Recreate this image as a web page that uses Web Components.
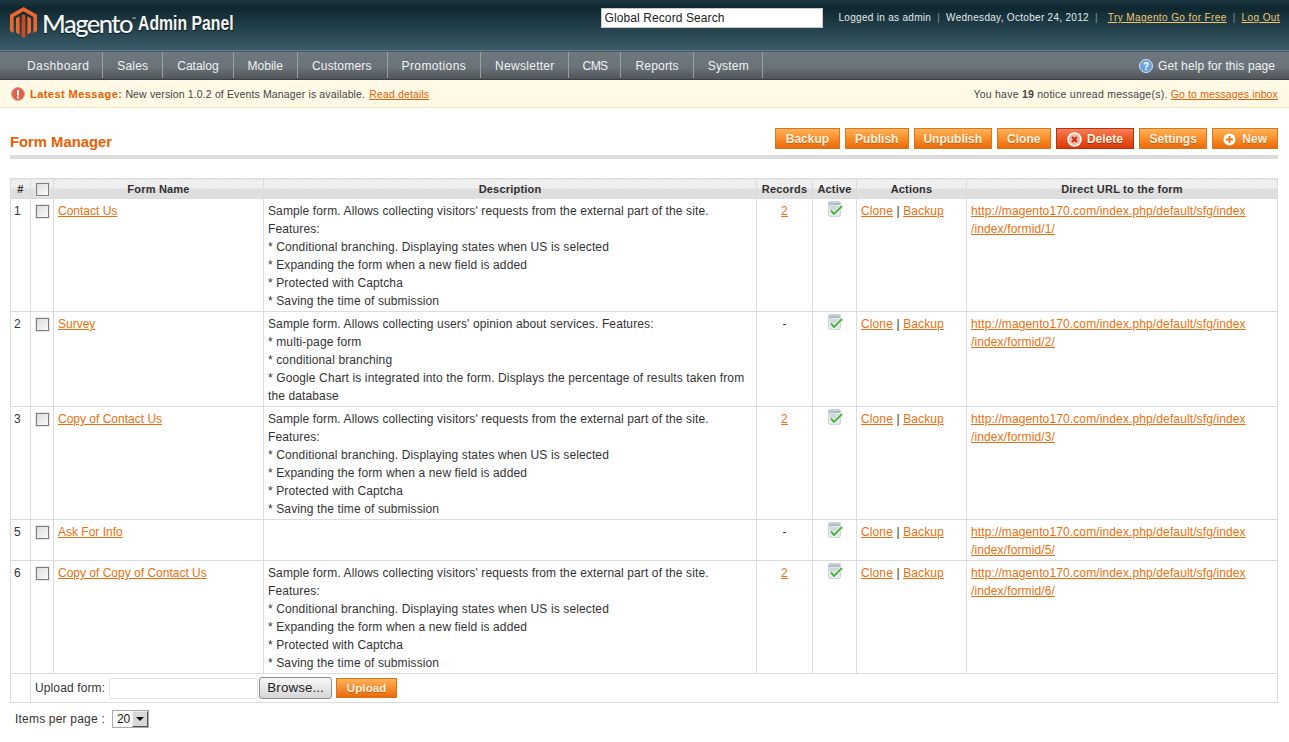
<!DOCTYPE html>
<html><head><meta charset="utf-8"><title>Form Manager</title>
<style>
html,body{margin:0;padding:0;background:#fff;overflow:hidden}
body{font:12px/18px "Liberation Sans",Arial,sans-serif;color:#2f2f2f;width:1289px;height:742px}
mg-header,mg-nav,mg-notice,mg-titlebar,mg-form-table,mg-pager{display:block}
</style></head><body>
<mg-header></mg-header>
<mg-nav></mg-nav>
<mg-notice></mg-notice>
<mg-titlebar title-text="Form Manager">
  <mg-button>Backup</mg-button><mg-button>Publish</mg-button><mg-button compact>Unpublish</mg-button><mg-button>Clone</mg-button><mg-button variant="delete" icon="x">Delete</mg-button><mg-button>Settings</mg-button><mg-button icon="plus">New</mg-button>
</mg-titlebar>
<mg-form-table></mg-form-table>
<mg-pager></mg-pager>
<script>
function shadow(el,html){el.attachShadow({mode:'open'}).innerHTML=html;}
customElements.define('mg-header',class extends HTMLElement{connectedCallback(){shadow(this,`<style>
:host{display:block;height:51px;box-sizing:border-box;border-bottom:1px solid #5f7f8b;background:linear-gradient(#1c3640 0,#0f272f 8px,#3a5c69 100%);color:#e3e9eb;overflow:hidden}
.w{display:flex;justify-content:space-between;align-items:flex-start;height:100%}
.logo{display:flex;align-items:flex-start;padding:7px 0 0 10px}
.logo svg{display:block;flex:none}
.m{font:500 25.5px/30px Lato,"Open Sans",sans-serif;color:#f4f6f6;margin:1px 0 0 5px;letter-spacing:-1.5px;text-shadow:0 1px 1px #0a1a20;white-space:nowrap}
.m sup{font-size:5px;line-height:0;vertical-align:12px;letter-spacing:0}
.a{display:inline-block;font:bold 20px/33px "Liberation Sans",sans-serif;color:#f4f6f6;margin-left:2px;text-shadow:1px 1px 1px #0a1a20;white-space:nowrap;transform:scaleX(.79);transform-origin:0 50%}
.r{display:flex;align-items:center;padding:8px 9px 0 0}
.s{box-sizing:border-box;width:222px;height:20px;background:#fff;border:1px solid #c8c8c8;color:#222;font:12px/18px "Liberation Sans",sans-serif;padding:0 3px;margin-right:16px;letter-spacing:.1px}
.t{font-size:10px;line-height:18px;white-space:nowrap;letter-spacing:.3px}
.t i{font-style:normal;color:#7e959e;margin:0 6px}
.t i.w2{margin-right:10px}
.t a{color:#efc76c;text-decoration:underline;letter-spacing:.4px}
</style><div class="w"><div class="logo">
<svg width="27" height="32" viewBox="0 0 27 32"><path d="M13.500 0 27 7.800V24l-3.600 2.100V9.900L13.500 4.200 3.600 9.900v16.200L0 24V7.800Z" fill="#ee672f"/><path d="M6 11.300 9.600 9.200V27.600l-3.600-2.100Z" fill="#ee672f"/><path d="M17.400 9.200 21 11.300v14.200l-3.600 2.100Z" fill="#ee672f"/><path d="M11.700 8.200 13.500 7.200 15.300 8.200V29.500l-1.800 1.500-1.800-1.500Z" fill="#d4491a"/></svg>
<span class="m">Magento<sup>™</sup></span><span class="a">Admin Panel</span></div>
<div class="r"><div class="s">Global Record Search</div><div class="t">Logged in as admin<i>|</i>Wednesday, October 24, 2012<i class="w2">|</i><a>Try Magento Go for Free</a><i>|</i><a>Log Out</a></div></div></div>`);}});
customElements.define('mg-nav',class extends HTMLElement{connectedCallback(){
const items=['Dashboard','Sales','Catalog','Mobile','Customers','Promotions','Newsletter','CMS','Reports','System'];
shadow(this,`<style>
:host{display:block;height:29px;box-sizing:border-box;background:linear-gradient(#6f787e 0,#6a7379 55%,#50565b 100%);color:#f0f2f3;border-bottom:1px solid #3c4145;border-top:1px solid #54595d}
.w{display:flex;justify-content:space-between;height:100%;padding-left:13px}
ul{display:flex;list-style:none;margin:0;padding:0}
li{padding:0 14px;font-size:12px;line-height:28px;letter-spacing:.18px;border-right:1px solid #9aa1a6;height:26px}
li:nth-child(1){letter-spacing:.4px;padding-right:13px}
li:nth-child(3),li:nth-child(4){letter-spacing:0}
li:nth-child(5){padding-right:15px}
li:nth-child(6){letter-spacing:.38px}
li:nth-child(7){letter-spacing:.28px;padding-right:13px}
li:nth-child(8){letter-spacing:-.6px;padding-right:13px}
li:nth-child(10){padding-right:13px}
.h{display:flex;align-items:center;font-size:12px;letter-spacing:.1px;padding:0 14px 0 0;height:27px;gap:5px}
svg{display:block}
</style><div class="w"><ul>${items.map(i=>`<li>${i}</li>`).join('')}</ul>
<div class="h"><svg width="14" height="14" viewBox="0 0 14 14"><circle cx="7" cy="7" r="6.500" fill="#6fa3d8" stroke="#d6e6f5"/><text x="7" y="10.500" font-size="10" font-weight="bold" text-anchor="middle" fill="#fff" font-family="Liberation Sans">?</text></svg>Get help for this page</div></div>`);}});
customElements.define('mg-notice',class extends HTMLElement{connectedCallback(){shadow(this,`<style>
:host{display:block;height:28px;box-sizing:border-box;background:#fff9e6;border-bottom:1px solid #f2e6bb;font-size:10.500px;letter-spacing:.14px;color:#444}
.w{display:flex;justify-content:space-between;align-items:center;height:27px;padding:0 11px;white-space:nowrap}
.l{display:flex;align-items:center;gap:5px}
.l a{margin-left:1px}
b.o{color:#eb5e00;font-size:11px;letter-spacing:.45px}
a{color:#eb5e00;text-decoration:underline}
.rt{letter-spacing:.24px}
.rt a{letter-spacing:.14px}
svg{display:block}
</style><div class="w"><div class="l"><svg width="14" height="14" viewBox="0 0 14 14"><circle cx="7" cy="7" r="6.500" fill="#e2604c" stroke="#e9a08f"/><rect x="6" y="3" width="2" height="5.500" fill="#fff"/><rect x="6" y="9.500" width="2" height="2" fill="#fff"/></svg><span><b class="o">Latest Message:</b> New version 1.0.2 of Events Manager is available. <a>Read details</a></span></div>
<div class="rt">You have <b>19</b> notice unread message(s). <a>Go to messages inbox</a></div></div>`);}});
customElements.define('mg-button',class extends HTMLElement{connectedCallback(){
const ic=this.getAttribute('icon');
const icon=ic==='x'?`<svg width="15" height="15" viewBox="0 0 15 15"><circle cx="7.500" cy="7.500" r="6.500" fill="#f6b9a8" stroke="#fff" stroke-width="1.500"/><path d="M5 5l5 5M10 5l-5 5" stroke="#d0300f" stroke-width="2.200"/></svg>`:ic==='plus'?`<svg width="13" height="13" viewBox="0 0 13 13"><circle cx="6.500" cy="6.500" r="6" fill="#fff"/><path d="M6.500 3v7M3 6.500h7" stroke="#ee7a14" stroke-width="2"/></svg>`:'';
const pad=this.hasAttribute('compact')?'8.500':ic?'10':'9.500';
shadow(this,`<style>
:host{display:block}
.b{box-sizing:border-box;height:21px;display:flex;align-items:center;justify-content:center;gap:${ic==='plus'?'6':'5'}px;padding:1px ${pad}px 0;font:bold 12px/19px "Liberation Sans",sans-serif;color:#fff3e0;white-space:nowrap;border:1px solid #d9751c;background:linear-gradient(#fdb25b 0,#f9912c 45%,#ec6a0a 100%);text-shadow:0 1px 0 #c85f10}
:host([variant=delete]) .b{border-color:#b8330d;background:linear-gradient(#f5805a 0,#ee5a27 45%,#d93a08 100%);text-shadow:0 1px 0 #a52c08}
svg{display:block}
</style><div class="b">${icon}<slot></slot></div>`);}});
customElements.define('mg-titlebar',class extends HTMLElement{connectedCallback(){shadow(this,`<style>
:host{display:block;margin:20px 11px 0 10px;height:31px;box-sizing:border-box;border-bottom:4px solid #dcdcdc;padding-bottom:6px}
.w{display:flex;justify-content:space-between;align-items:flex-start}
h3{margin:5px 0 0;font:bold 14.800px/18px "Liberation Sans",sans-serif;color:#eb5e00}
.g{display:flex;gap:5px}
</style><div class="w"><h3>${this.getAttribute('title-text')}</h3><div class="g"><slot></slot></div></div>`);}});
const D1="Sample form. Allows collecting visitors' requests from the external part of the site.<br>Features:<br>* Conditional branching. Displaying states when US is selected<br>* Expanding the form when a new field is added<br>* Protected with Captcha<br>* Saving the time of submission";
const D2="Sample form. Allows collecting users' opinion about services. Features:<br>* multi-page form<br>* conditional branching<br>* Google Chart is integrated into the form. Displays the percentage of results taken from<br>the database";
const rows=[[1,'Contact Us',D1,'2'],[2,'Survey',D2,'-'],[3,'Copy of Contact Us',D1,'2'],[5,'Ask For Info','','-'],[6,'Copy of Copy of Contact Us',D1,'2']];
const ok=`<svg width="16" height="16" viewBox="0 0 16 16"><path d="M1.500 1.500Q1.500 .5 2.500 .5H12.500Q13.500 .5 13.500 1.500V13.500Q13.500 15.500 11.500 15.500H3.500Q1.500 15.500 1.500 13.500Z" fill="#e3e8eb" stroke="#ccd3d7"/><path d="M2 1.500h11v2.500H2z" fill="#aebcc5"/><path d="M3 6h9M3 8h6" stroke="#bcc8cf"/><path d="M4 9.500 7 13l8-8" fill="none" stroke="#fff" stroke-width="3.600"/><path d="M4 9.500 7 13l8-8" fill="none" stroke="#4cb53c" stroke-width="2.200"/></svg>`;
customElements.define('mg-form-table',class extends HTMLElement{connectedCallback(){shadow(this,`<style>
:host{display:block;margin:19px 11px 0 10px}
table{border-collapse:collapse;table-layout:fixed;width:1268px;border:1px solid #d6d6d6}
th,td{border:1px solid #dcdcdc;padding:3px 4px 1px;vertical-align:top;font-size:12px;line-height:18px;letter-spacing:.12px;color:#333}
th{height:20px;box-sizing:border-box;padding:0 2px;font-size:11px;line-height:18px;letter-spacing:.2px;text-align:center;font-weight:bold;color:#2f2f2f;vertical-align:bottom;background:linear-gradient(transparent 50%,#dedede 50%),repeating-linear-gradient(135deg,#fff 0 1.414px,#cfcfcf 1.414px 2.1213px)}
td.f{letter-spacing:0}
a{color:#eb6f0c;text-decoration:underline}
td.c{text-align:center}
td.n{padding-left:3px}
.x{appearance:none;-webkit-appearance:none;display:block;margin:3px auto 0;box-sizing:border-box;width:13px;height:13px;border:1px solid #7d7d7d;outline:1px solid #e8e8e8;background:linear-gradient(135deg,#dcdcdc,#fbfbfb)}
th .x{margin-top:2px;margin-bottom:2px}
svg{display:block;margin:-1px auto 0 10px}
td.u{padding:3px 3px 3px 4px}
.up{display:flex;align-items:center;height:22px}
.i{box-sizing:border-box;width:149px;height:21px;border:1px solid #e2e2e2;margin:0 1px 0 4px;background:#fff;border-radius:2px}
.br{box-sizing:border-box;width:73px;height:22px;border:1px solid #8f8f8f;border-radius:3px;background:linear-gradient(#f8f8f8,#d6d6d6);font-size:13.333px;line-height:20px;text-align:center;color:#222;margin-right:4px}
.ub{box-sizing:border-box;width:61px;height:20px;border:1px solid #d9751c;background:linear-gradient(#fdb25b,#ec6a0a);color:#fff3e0;font-weight:bold;font-size:11.500px;line-height:18px;text-align:center;text-shadow:0 1px 0 #c85f10}
</style><table><colgroup><col style="width:20px"><col style="width:23px"><col style="width:210px"><col style="width:493px"><col style="width:56px"><col style="width:44px"><col style="width:110px"><col style="width:311px"></colgroup>
<thead><tr><th>#</th><th><input class="x" type="checkbox"></th><th>Form Name</th><th>Description</th><th>Records</th><th>Active</th><th>Actions</th><th>Direct URL to the form</th></tr></thead>
<tbody>${rows.map(r=>`<tr><td class="n">${r[0]}</td><td><input class="x" type="checkbox"></td><td class="f"><a>${r[1]}</a></td><td>${r[2]}</td><td class="c">${r[3]==='2'?'<a>2</a>':'-'}</td><td>${ok}</td><td><a>Clone</a> | <a>Backup</a></td><td><a>http://magento170.com/index.php/default/sfg/index<br>/index/formid/${r[0]}/</a></td></tr>`).join('')}
<tr><td></td><td colspan="7" class="u"><div class="up">Upload form:<span class="i"></span><span class="br">Browse...</span><span class="ub">Upload</span></div></td></tr></tbody></table>`);}});
customElements.define('mg-pager',class extends HTMLElement{connectedCallback(){shadow(this,`<style>
:host{display:block;padding:7px 0 0 15px}
.w{display:flex;align-items:center;height:18px;font-size:12px;letter-spacing:.2px;color:#333}
.s{box-sizing:border-box;width:37px;height:18px;border:1px solid #a9a9a9;margin-left:7px;display:flex;justify-content:space-between;color:#111;padding-left:4px;line-height:16px;letter-spacing:0}
.a{box-sizing:border-box;width:16px;height:16px;background:#d8d8d8;border:1px solid;border-color:#eee #555 #555 #eee;display:flex;align-items:center;justify-content:center}
.a::after{content:"";border:4px solid transparent;border-top:4px solid #111;border-bottom:0}
</style><div class="w">Items per page :<div class="s">20<span class="a"></span></div></div>`);}});
</script>
</body></html>
